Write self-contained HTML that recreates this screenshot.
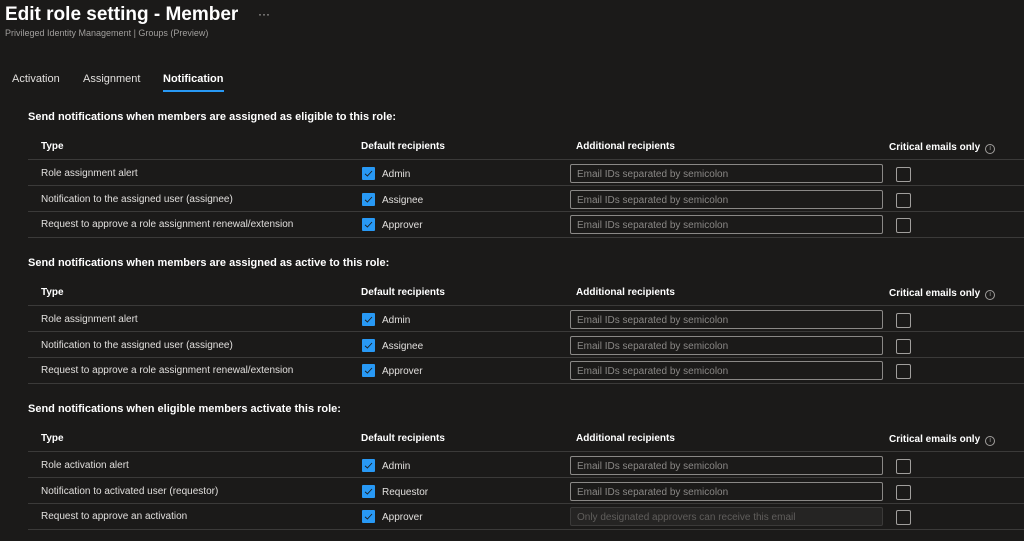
<!DOCTYPE html>
<html><head><meta charset="utf-8"><style>
*{margin:0;padding:0;box-sizing:border-box}
body{width:1024px;height:541px;background:#1b1a19;color:#e1dfdd;font-family:"Liberation Sans",sans-serif;position:relative;overflow:hidden}
.a{position:absolute;white-space:nowrap}
.h1{left:5px;top:4px;font-size:19px;color:#fff;font-weight:bold}
.sub{left:5px;top:28px;font-size:9px;color:#a19f9d}
.tab{top:72px;font-size:11px;color:#e1dfdd}
.sec{left:28px;font-size:11px;font-weight:bold;color:#fff}
.th{font-size:10px;font-weight:bold;color:#fff}
.td{font-size:10px;color:#e1dfdd}
.line{position:absolute;left:28px;right:0;height:1px;background:#3b3a39}
.cb{position:absolute;left:362px;width:13px;height:13px;background:#2899f5;border-radius:1px}
.cb svg{position:absolute;left:2px;top:2px}
.in{position:absolute;left:570px;width:313px;height:19px;border:1px solid #8a8886;border-radius:2px;font-size:10px;color:#8a8886;padding:3px 6px;background:#1b1a19}
.in.d{border-color:#3b3a39;background:#252423;color:#605e5c}
.ck{position:absolute;left:896px;width:15px;height:15px;border:1px solid #a19f9d;border-radius:2px}
.info{display:inline-block;width:10px;height:10px;border:1px solid #a19f9d;border-radius:50%;font-size:7px;text-align:center;line-height:8px;color:#a19f9d;font-weight:normal;margin-left:5px;vertical-align:0}
</style></head><body>
<div class="a h1">Edit role setting - Member</div>
<div class="a" style="left:258px;top:7px;font-size:12px;color:#c8c6c4">···</div>
<div class="a sub">Privileged Identity Management | Groups (Preview)</div>
<div class="a tab" style="left:12px;top:73px">Activation</div>
<div class="a tab" style="left:83px;top:73px">Assignment</div>
<div class="a tab" style="left:163px;top:73px;font-weight:bold;color:#fff">Notification</div>
<div class="a" style="left:163px;top:90px;width:61px;height:2px;background:#2899f5"></div>
<div id="c"></div>
<script>
var secs=[["Send notifications when members are assigned as eligible to this role:",[["Role assignment alert","Admin"],["Notification to the assigned user (assignee)","Assignee"],["Request to approve a role assignment renewal/extension","Approver"]]],
["Send notifications when members are assigned as active to this role:",[["Role assignment alert","Admin"],["Notification to the assigned user (assignee)","Assignee"],["Request to approve a role assignment renewal/extension","Approver"]]],
["Send notifications when eligible members activate this role:",[["Role activation alert","Admin"],["Notification to activated user (requestor)","Requestor"],["Request to approve an activation","Approver"]]]];
var h="";
secs.forEach(function(s,i){var y=i*146;
h+='<div class="a sec" style="top:'+(111+y)+'px">'+s[0]+'</div>';
h+='<div class="a th" style="left:41px;top:'+(141+y)+'px">Type</div>';
h+='<div class="a th" style="left:361px;top:'+(141+y)+'px">Default recipients</div>';
h+='<div class="a th" style="left:576px;top:'+(141+y)+'px">Additional recipients</div>';
h+='<div class="a th" style="left:889px;top:'+(142+y)+'px">Critical emails only<span class="info">i</span></div>';
h+='<div class="line" style="top:'+(159+y)+'px"></div>';
s[1].forEach(function(r,j){var top=y+160+[0,26,51][j];
h+='<div class="a td" style="left:41px;top:'+(top+8)+'px">'+r[0]+'</div>';
h+='<div class="cb" style="top:'+(top+7)+'px"><svg width="9" height="9" viewBox="0 0 9 9"><path d="M1 4.8L3.4 7L8 2" stroke="#1b1a19" stroke-width="0.9" fill="none"/></svg></div>';
h+='<div class="a td" style="left:382px;top:'+(top+9)+'px">'+r[1]+'</div>';
var d=(i==2&&j==2);
h+='<div class="in'+(d?' d':'')+'" style="top:'+(top+4)+'px;padding-top:4px">'+(d?'Only designated approvers can receive this email':'Email IDs separated by semicolon')+'</div>';
h+='<div class="ck" style="top:'+(top+7)+'px"></div>';
h+='<div class="line" style="top:'+(top+[25,25,26][j])+'px"></div>';
});});
document.getElementById("c").innerHTML=h;
</script>
</body></html>
